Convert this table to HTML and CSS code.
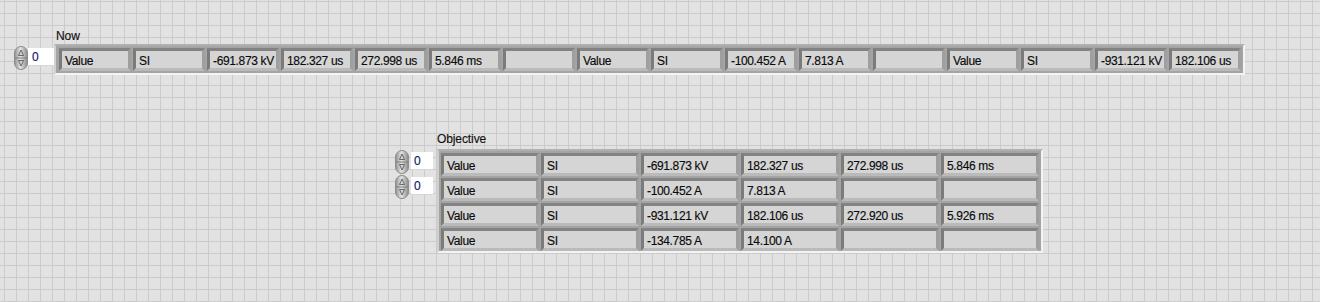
FILE: index.html
```html
<!DOCTYPE html>
<html>
<head>
<meta charset="utf-8">
<title>Front Panel</title>
<link rel="stylesheet" href="styles.css">
</head>
<body>
<div class="panel">
  <div class="ctl now">
    <div class="label">Now</div>
    <div class="row">
      <div class="index">
        <div class="idx">
          <svg class="spin" viewBox="0 0 14 24" width="14" height="24">
            <defs>
              <linearGradient id="sg1" x1="0" y1="0" x2="1" y2="0">
                <stop offset="0" stop-color="#8f8f8f"/>
                <stop offset="0.45" stop-color="#e4e4e4"/>
                <stop offset="1" stop-color="#8a8a8a"/>
              </linearGradient>
            </defs>
            <rect x="0.5" y="0.5" width="13" height="23" rx="6.5" ry="6.5" fill="url(#sg1)" stroke="#8c8c8c"/>
            <line x1="1" y1="12" x2="13" y2="12" stroke="#7e7e7e"/>
            <path d="M4.5 9.5 L7 4 L9.5 9.5 Z" fill="#d2d2d2" stroke="#4e4e4e" stroke-width="0.8"/>
            <path d="M4.5 14.5 L9.5 14.5 L7 20 Z" fill="#d2d2d2" stroke="#4e4e4e" stroke-width="0.8"/>
          </svg>
          <div class="num">0</div>
        </div>
      </div>
      <div class="arr">
        <div class="cell">Value</div>
        <div class="cell">SI</div>
        <div class="cell">-691.873 kV</div>
        <div class="cell">182.327 us</div>
        <div class="cell">272.998 us</div>
        <div class="cell">5.846 ms</div>
        <div class="cell"></div>
        <div class="cell">Value</div>
        <div class="cell">SI</div>
        <div class="cell">-100.452 A</div>
        <div class="cell">7.813 A</div>
        <div class="cell"></div>
        <div class="cell">Value</div>
        <div class="cell">SI</div>
        <div class="cell">-931.121 kV</div>
        <div class="cell">182.106 us</div>
      </div>
    </div>
  </div>

  <div class="ctl obj">
    <div class="label">Objective</div>
    <div class="row">
      <div class="index">
        <div class="idx">
          <svg class="spin" viewBox="0 0 14 24" width="14" height="24">
            <defs>
              <linearGradient id="sg2" x1="0" y1="0" x2="1" y2="0">
                <stop offset="0" stop-color="#8f8f8f"/>
                <stop offset="0.45" stop-color="#e4e4e4"/>
                <stop offset="1" stop-color="#8a8a8a"/>
              </linearGradient>
            </defs>
            <rect x="0.5" y="0.5" width="13" height="23" rx="6.5" ry="6.5" fill="url(#sg2)" stroke="#8c8c8c"/>
            <line x1="1" y1="12" x2="13" y2="12" stroke="#7e7e7e"/>
            <path d="M4.5 9.5 L7 4 L9.5 9.5 Z" fill="#d2d2d2" stroke="#4e4e4e" stroke-width="0.8"/>
            <path d="M4.5 14.5 L9.5 14.5 L7 20 Z" fill="#d2d2d2" stroke="#4e4e4e" stroke-width="0.8"/>
          </svg>
          <div class="num">0</div>
        </div>
        <div class="idx">
          <svg class="spin" viewBox="0 0 14 24" width="14" height="24">
            <rect x="0.5" y="0.5" width="13" height="23" rx="6.5" ry="6.5" fill="url(#sg2)" stroke="#8c8c8c"/>
            <line x1="1" y1="12" x2="13" y2="12" stroke="#7e7e7e"/>
            <path d="M4.5 9.5 L7 4 L9.5 9.5 Z" fill="#d2d2d2" stroke="#4e4e4e" stroke-width="0.8"/>
            <path d="M4.5 14.5 L9.5 14.5 L7 20 Z" fill="#d2d2d2" stroke="#4e4e4e" stroke-width="0.8"/>
          </svg>
          <div class="num">0</div>
        </div>
      </div>
      <div class="arr">
        <div class="cell">Value</div>
        <div class="cell">SI</div>
        <div class="cell">-691.873 kV</div>
        <div class="cell">182.327 us</div>
        <div class="cell">272.998 us</div>
        <div class="cell">5.846 ms</div>

        <div class="cell">Value</div>
        <div class="cell">SI</div>
        <div class="cell">-100.452 A</div>
        <div class="cell">7.813 A</div>
        <div class="cell"></div>
        <div class="cell"></div>

        <div class="cell">Value</div>
        <div class="cell">SI</div>
        <div class="cell">-931.121 kV</div>
        <div class="cell">182.106 us</div>
        <div class="cell">272.920 us</div>
        <div class="cell">5.926 ms</div>

        <div class="cell">Value</div>
        <div class="cell">SI</div>
        <div class="cell">-134.785 A</div>
        <div class="cell">14.100 A</div>
        <div class="cell"></div>
        <div class="cell"></div>
      </div>
    </div>
  </div>
</div>
</body>
</html>
```
FILE: styles.css
```css
html, body {
  margin: 0;
  padding: 0;
}

body {
  width: 1320px;
  height: 302px;
  overflow: hidden;
  background-color: #e2e2e2;
  background-image:
    linear-gradient(to right, #cbcbcb 1px, transparent 1px),
    linear-gradient(to bottom, #cbcbcb 1px, transparent 1px);
  background-size: 12px 12px;
  background-position: 4px 1px;
  font-family: "Liberation Sans", Arial, sans-serif;
  font-size: 12px;
  color: #111;
  -webkit-text-stroke: 0.15px currentColor;
}

.panel {
  position: relative;
  width: 1320px;
  height: 302px;
}

.ctl {
  position: absolute;
  display: flex;
  flex-direction: column;
}

.now {
  left: 14px;
  top: 29px;
}

.obj {
  left: 395px;
  top: 132px;
}

.label {
  margin-left: 42px;
  height: 15px;
  line-height: 15px;
  letter-spacing: -0.1px;
  white-space: nowrap;
}

.obj .label {
  margin-bottom: 2px;
}

.row {
  display: flex;
  align-items: flex-start;
}

.index {
  display: flex;
  flex-direction: column;
}

.now .index {
  width: 40px;
  margin-top: 2px;
}

.obj .index {
  width: 42px;
  margin-top: 1px;
}

.idx {
  display: flex;
  align-items: flex-start;
  height: 25px;
}

.spin {
  display: block;
  flex: none;
}

.num {
  margin-top: 2px;
  height: 18px;
  line-height: 18px;
  background: #ffffff;
  box-sizing: border-box;
  padding-left: 4px;
  color: #14206a;
  border-bottom: 1px solid #d6d6d6;
}

.now .num {
  width: 26px;
}

.obj .num {
  width: 22px;
  margin-left: 2px;
  padding-left: 3px;
}

.arr {
  display: grid;
  box-sizing: border-box;
  border: 2px solid;
  border-color: #b0b0b0 #f3f3f3 #f3f3f3 #d0d0d0;
  background: #a4a4a4;
  gap: 2px;
}

.now .arr {
  grid-template-columns: repeat(16, 72px);
  grid-auto-rows: 23px;
  padding: 2px 2px 2px 3px;
}

.obj .arr {
  grid-template-columns: repeat(6, 98px);
  grid-auto-rows: 23px;
  padding: 2px 2px 0 2px;
}

.cell {
  box-sizing: border-box;
  height: 23px;
  border-style: solid;
  border-width: 3px;
  border-color: #838383 #9f9f9f #bababa #7b7b7b;
  background: #d5d5d5;
  padding: 4px 0 0 3px;
  line-height: 13px;
  letter-spacing: -0.35px;
  color: #0a0a0a;
  white-space: nowrap;
  overflow: hidden;
}
```
